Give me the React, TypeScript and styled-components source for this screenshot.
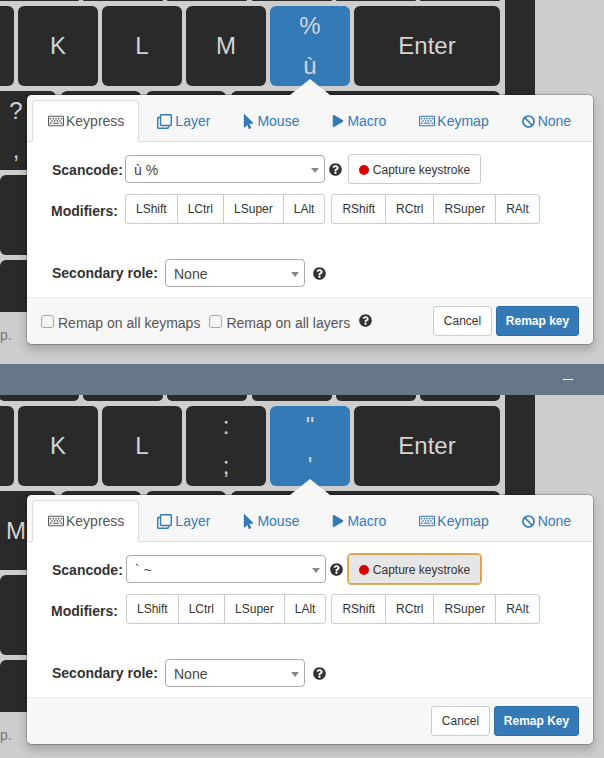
import React from "react";
import styled, { createGlobalStyle } from "styled-components";
import { FaRegKeyboard, FaRegClone, FaMousePointer, FaPlay, FaBan, FaQuestionCircle } from "react-icons/fa";

const Global = createGlobalStyle`
  html, body { margin: 0; padding: 0; background: #cdcdcd; }
  body { font-family: "Liberation Sans", Arial, sans-serif; font-size: 14px; color: #333; width: 604px; height: 758px; overflow: hidden; }
  * { box-sizing: border-box; }
`;

const Page = styled.div`
  display: flex;
  flex-direction: column;
  width: 604px;
  height: 758px;
`;
const Section = styled.section<{ $height: number }>`
  position: relative;
  height: ${(p) => p.$height}px;
  overflow: hidden;
  flex: none;
`;
const TitleBar = styled.div`
  height: 31px;
  flex: none;
  background: #67778a;
  display: flex;
  justify-content: flex-end;
  align-items: center;
  padding-right: 31px;
`;
const Minimise = styled.span`
  width: 10px;
  height: 1px;
  background: #fff;
`;
const Keyboard = styled.div<{ $height: number }>`
  display: flex;
  width: 535px;
  height: ${(p) => p.$height}px;
  overflow: hidden;
`;
const KeyArea = styled.div`
  width: 500px;
  flex: none;
  display: flex;
  flex-direction: column;
  gap: 5px;
  overflow: hidden;
`;
const Strip = styled.div`
  width: 30px;
  margin-left: 5px;
  flex: none;
  background: #2a2a2a;
`;
const KeyRow = styled.div<{ $height: number; $shift: number; $gap: number }>`
  display: flex;
  flex: none;
  height: ${(p) => p.$height}px;
  margin-left: ${(p) => p.$shift}px;
  gap: ${(p) => p.$gap}px;
`;
const Key = styled.div<{ $active?: boolean; $grow?: boolean }>`
  flex: ${(p) => (p.$grow ? "1 1 0" : "0 0 80px")};
  background: ${(p) => (p.$active ? "#337ab7" : "#2a2a2a")};
  color: #d4d4d4;
  border-radius: 6px;
  font-size: 24px;
  display: flex;
  flex-direction: column;
  align-items: center;
  justify-content: center;
`;
const StubKey = styled.div`
  flex: 1 1 0;
  background: #2a2a2a;
  border-radius: 0 0 5px 5px;
`;
const Legend = styled.span`
  height: 40px;
  display: flex;
  align-items: center;
`;
const Caption = styled.p`
  margin: 15px 0 0;
  color: #777;
  font-size: 14px;
  line-height: 16px;
`;
const Popover = styled.div<{ $top: number }>`
  position: absolute;
  left: 26px;
  top: ${(p) => p.$top}px;
  width: 568px;
  height: 251px;
  background: #fff;
  border: 1px solid rgba(0, 0, 0, 0.2);
  border-radius: 6px;
  box-shadow: 0 5px 10px rgba(0, 0, 0, 0.2);
  background-clip: padding-box;
  display: flex;
  flex-direction: column;
`;
const Arrow = styled.span`
  position: absolute;
  left: 263px;
  top: -16px;
  width: 0;
  height: 0;
  border-left: 20px solid transparent;
  border-right: 20px solid transparent;
  border-bottom: 16px solid #f7f7f7;
`;
const TabBar = styled.div`
  height: 47px;
  flex: none;
  background: #f7f7f7;
  border-bottom: 1px solid #ddd;
  border-radius: 5px 5px 0 0;
  padding: 5px 0 0 5px;
  display: flex;
  gap: 2px;
`;
const Tab = styled.div<{ $active?: boolean }>`
  height: 42px;
  padding: 10px 14px 10px 15px;
  line-height: 20px;
  display: flex;
  align-items: center;
  gap: 3px;
  border: 1px solid ${(p) => (p.$active ? "#ddd" : "transparent")};
  border-bottom-color: ${(p) => (p.$active ? "#fff" : "transparent")};
  border-radius: 4px 4px 0 0;
  background: ${(p) => (p.$active ? "#fff" : "transparent")};
  color: ${(p) => (p.$active ? "#555" : "#337ab7")};
`;
const TabIcon = styled.span<{ $width: number }>`
  display: inline-flex;
  align-items: center;
  justify-content: center;
  flex: none;
  width: ${(p) => p.$width}px;
  & > svg { flex: none; }
`;
const Body = styled.div`
  flex: 1;
  padding: 12px 0 0 25px;
`;
const FormRow = styled.div<{ $top?: number }>`
  display: flex;
  align-items: center;
  margin-top: ${(p) => p.$top ?? 0}px;
`;
const Label = styled.label<{ $width: number; $nudge?: number; $back?: number }>`
  flex: none;
  width: ${(p) => p.$width}px;
  margin-left: ${(p) => -(p.$back ?? 0)}px;
  padding-top: ${(p) => p.$nudge ?? 0}px;
  font-weight: 700;
  color: #333;
  white-space: nowrap;
`;
const SelectBox = styled.div<{ $width: number }>`
  position: relative;
  width: ${(p) => p.$width}px;
  height: 28px;
  flex: none;
  border: 1px solid #aaa;
  border-radius: 4px;
  background: #fff;
  color: #444;
  line-height: 28px;
  padding-left: 8px;
  &::after {
    content: "";
    position: absolute;
    right: 5px;
    top: 12px;
    border-left: 4px solid transparent;
    border-right: 4px solid transparent;
    border-top: 5px solid #888;
  }
`;
const Help = styled(FaQuestionCircle)<{ $left: number; $lift?: number }>`
  flex: none;
  width: 13px;
  height: 13px;
  color: #333;
  margin-left: ${(p) => p.$left}px;
  margin-bottom: ${(p) => p.$lift ?? 0}px;
`;
const CaptureButton = styled.button<{ $active?: boolean }>`
  margin-left: ${(p) => (p.$active ? 5 : 6)}px;
  width: 133px;
  height: 30px;
  font: 12px "Liberation Sans", Arial, sans-serif;
  color: #333;
  background: ${(p) => (p.$active ? "#e6e6e6" : "#fff")};
  border: 1px solid ${(p) => (p.$active ? "#dca24c" : "#ccc")};
  outline: ${(p) => (p.$active ? "1px solid #e0ac5c" : "none")};
  border-radius: 3px;
  display: flex;
  align-items: center;
  justify-content: center;
  gap: 4px;
  padding: 1px 0 0;
`;
const RecDot = styled.span`
  width: 10px;
  height: 10px;
  border-radius: 50%;
  background: #d90000;
`;
const ButtonGroup = styled.div<{ $left?: number }>`
  display: flex;
  margin-left: ${(p) => p.$left ?? 0}px;
`;
const ModButton = styled.button`
  height: 30px;
  padding: 0 10px;
  font: 12px/18px "Liberation Sans", Arial, sans-serif;
  color: #333;
  background: #fff;
  border: 1px solid #ccc;
  margin-left: -1px;
  &:first-child { margin-left: 0; border-radius: 3px 0 0 3px; }
  &:last-child { border-radius: 0 3px 3px 0; }
`;
const Footer = styled.div`
  height: 47px;
  flex: none;
  background: #f7f7f7;
  border-top: 1px solid #e9e9e9;
  border-radius: 0 0 5px 5px;
  padding: 0 14px;
  display: flex;
  align-items: center;
`;
const CheckLabel = styled.label`
  display: flex;
  align-items: center;
  color: #555;
  margin: 3px 9px 0 0;
  white-space: nowrap;
  line-height: 20px;
`;
const Check = styled.input`
  appearance: none;
  width: 13px;
  height: 13px;
  margin: -3px 4px 0 0;
  background: #f4f4f4;
  border: 1px solid #a9a9a9;
  border-radius: 3px;
`;
const Actions = styled.div`
  margin-left: auto;
  display: flex;
  gap: 4px;
`;
const ActionButton = styled.button<{ $primary?: boolean; $width: number }>`
  width: ${(p) => p.$width}px;
  height: 30px;
  padding: 0;
  font: ${(p) => (p.$primary ? 700 : 400)} 12px "Liberation Sans", Arial, sans-serif;
  color: ${(p) => (p.$primary ? "#fff" : "#333")};
  background: ${(p) => (p.$primary ? "#337ab7" : "#fff")};
  border: 1px solid ${(p) => (p.$primary ? "#2e6da4" : "#ccc")};
  border-radius: 3px;
`;

const tabs = [
  { name: "Keypress", width: 15, icon: <FaRegKeyboard size={16} /> },
  { name: "Layer", width: 15, icon: <FaRegClone size={15} /> },
  { name: "Mouse", width: 11, icon: <FaMousePointer size={15} /> },
  { name: "Macro", width: 12, icon: <FaPlay size={12} /> },
  { name: "Keymap", width: 15, icon: <FaRegKeyboard size={16} /> },
  { name: "None", width: 13, icon: <FaBan size={13} /> },
];
const leftMods = ["LShift", "LCtrl", "LSuper", "LAlt"];
const rightMods = ["RShift", "RCtrl", "RSuper", "RAlt"];

type Variant = {
  sectionHeight: number;
  keyboardHeight: number;
  popTop: number;
  stubHeight: number;
  thirdKey: React.ReactNode;
  activeKey: React.ReactNode;
  leftKey: React.ReactNode;
  scancode: string;
  labelWidth: number;
  groupGap: number;
  capturing?: boolean;
  showChecks?: boolean;
  confirm: string;
  confirmWidth: number;
};

function Screen(v: Variant) {
  return (
    <Section $height={v.sectionHeight}>
      <Keyboard $height={v.keyboardHeight}>
        <KeyArea>
          <KeyRow $height={v.stubHeight} $shift={-1} $gap={4.2}>
            {[0, 1, 2, 3, 4, 5].map((i) => (
              <StubKey key={i} />
            ))}
          </KeyRow>
          <KeyRow $height={80} $shift={-66} $gap={4}>
            <Key />
            <Key>K</Key>
            <Key>L</Key>
            <Key>{v.thirdKey}</Key>
            <Key $active>{v.activeKey}</Key>
            <Key $grow>Enter</Key>
          </KeyRow>
          <KeyRow $height={79} $shift={-24} $gap={5}>
            <Key>{v.leftKey}</Key>
            <Key />
            <Key />
            <Key $grow />
          </KeyRow>
          <KeyRow $height={80} $shift={0} $gap={5}>
            <Key />
            <Key $grow />
          </KeyRow>
          <KeyRow $height={80} $shift={0} $gap={5}>
            <Key />
            <Key $grow />
          </KeyRow>
        </KeyArea>
        <Strip />
      </Keyboard>
      <Caption>p.</Caption>
      <Popover $top={v.popTop}>
        <Arrow />
        <TabBar>
          {tabs.map((t, i) => (
            <Tab key={t.name} $active={i === 0}>
              <TabIcon $width={t.width}>{t.icon}</TabIcon>
              {t.name}
            </Tab>
          ))}
        </TabBar>
        <Body>
          <FormRow>
            <Label $width={v.labelWidth} $nudge={2}>Scancode:</Label>
            <SelectBox $width={200}>{v.scancode}</SelectBox>
            <Help $left={4} />
            <CaptureButton $active={v.capturing}>
              <RecDot />
              Capture keystroke
            </CaptureButton>
          </FormRow>
          <FormRow $top={10}>
            <Label $width={v.labelWidth + 1} $nudge={4} $back={1}>Modifiers:</Label>
            <ButtonGroup>
              {leftMods.map((m) => (
                <ModButton key={m}>{m}</ModButton>
              ))}
            </ButtonGroup>
            <ButtonGroup $left={v.groupGap}>
              {rightMods.map((m) => (
                <ModButton key={m}>{m}</ModButton>
              ))}
            </ButtonGroup>
          </FormRow>
          <FormRow $top={35}>
            <Label $width={113}>Secondary role:</Label>
            <SelectBox $width={140}>None</SelectBox>
            <Help $left={8} />
          </FormRow>
        </Body>
        <Footer>
          {v.showChecks && (
            <>
              <CheckLabel>
                <Check type="checkbox" />
                Remap on all keymaps
              </CheckLabel>
              <CheckLabel>
                <Check type="checkbox" />
                Remap on all layers
              </CheckLabel>
              <Help $left={0} $lift={1} />
            </>
          )}
          <Actions>
            <ActionButton $width={59}>Cancel</ActionButton>
            <ActionButton $primary $width={v.confirmWidth}>
              {v.confirm}
            </ActionButton>
          </Actions>
        </Footer>
      </Popover>
    </Section>
  );
}

export default function App() {
  return (
    <Page>
      <Global />
      <Screen
        sectionHeight={364}
        keyboardHeight={312}
        popTop={94}
        stubHeight={1}
        thirdKey="M"
        activeKey={
          <>
            <Legend>%</Legend>
            <Legend>ù</Legend>
          </>
        }
        leftKey={
          <>
            <Legend>?</Legend>
            <Legend>,</Legend>
          </>
        }
        scancode="ù %"
        labelWidth={73}
        groupGap={6}
        showChecks
        confirm="Remap key"
        confirmWidth={83}
      />
      <TitleBar>
        <Minimise />
      </TitleBar>
      <Screen
        sectionHeight={363}
        keyboardHeight={317}
        popTop={99}
        stubHeight={6}
        thirdKey={
          <>
            <Legend>:</Legend>
            <Legend>;</Legend>
          </>
        }
        activeKey={
          <>
            <Legend>"</Legend>
            <Legend>'</Legend>
          </>
        }
        leftKey="M"
        scancode="` ~"
        labelWidth={74}
        groupGap={5}
        capturing
        confirm="Remap Key"
        confirmWidth={85}
      />
    </Page>
  );
}
